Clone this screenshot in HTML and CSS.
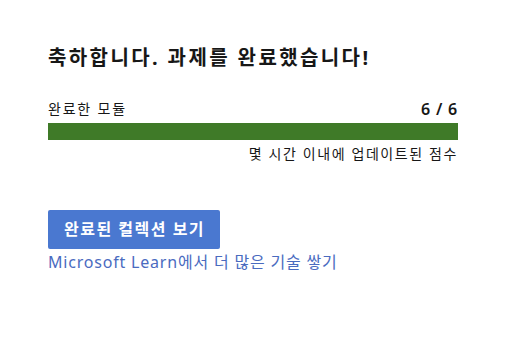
FILE: index.html
```html
<!DOCTYPE html>
<html lang="ko">
<head>
    <title>과제 완료</title>
    <link rel="stylesheet" href="styles.css">
</head>
<body>
    <div class="card">
        <h1 class="title">축하합니다. 과제를 완료했습니다!</h1>
        <div class="progress-head">
            <span>완료한 모듈</span>
            <span class="count">6 / 6</span>
        </div>
        <div class="bar"><div class="bar-fill" style="width: 100%"></div></div>
        <p class="note">몇 시간 이내에 업데이트된 점수</p>
        <a class="button" href="#">완료된 컬렉션 보기</a>
        <a class="link" href="#">Microsoft Learn에서 더 많은 기술 쌓기</a>
    </div>
</body>
</html>
```

FILE: styles.css
```css
body {
    margin: 0;
    background: #fff;
    font-family: "Noto Sans", "Noto Sans CJK KR", sans-serif;
    color: #171717;
}

.card {
    width: 410px;
    padding: 42px 0 0 48px;
}

.title {
    margin: 0 0 25px;
    font-size: 20px;
    font-weight: 700;
    line-height: 32px;
    letter-spacing: 2.4px;
}

.progress-head {
    display: flex;
    justify-content: space-between;
    font-size: 14px;
    line-height: 20px;
    letter-spacing: 1.8px;
}

.count {
    font-weight: 600;
    font-size: 16px;
    letter-spacing: 0.8px;
}

.bar {
    height: 17px;
    margin-top: 4px;
    background: #e6e6e6;
}

.bar-fill {
    height: 100%;
    background: #3f7a28;
}

.note {
    margin: 4px 0 0;
    text-align: right;
    font-size: 14px;
    line-height: 20px;
    letter-spacing: 1.6px;
}

.button {
    display: inline-block;
    margin-top: 46px;
    padding: 0 15px 0 16px;
    height: 39px;
    line-height: 39px;
    background: #4a78d0;
    color: #fff;
    border-radius: 2px;
    font-size: 16px;
    font-weight: 700;
    letter-spacing: 1.5px;
    text-decoration: none;
}

.link {
    display: block;
    color: #4a6bbf;
    font-size: 16px;
    line-height: 26px;
    letter-spacing: 0.8px;
    text-decoration: none;
}
```
